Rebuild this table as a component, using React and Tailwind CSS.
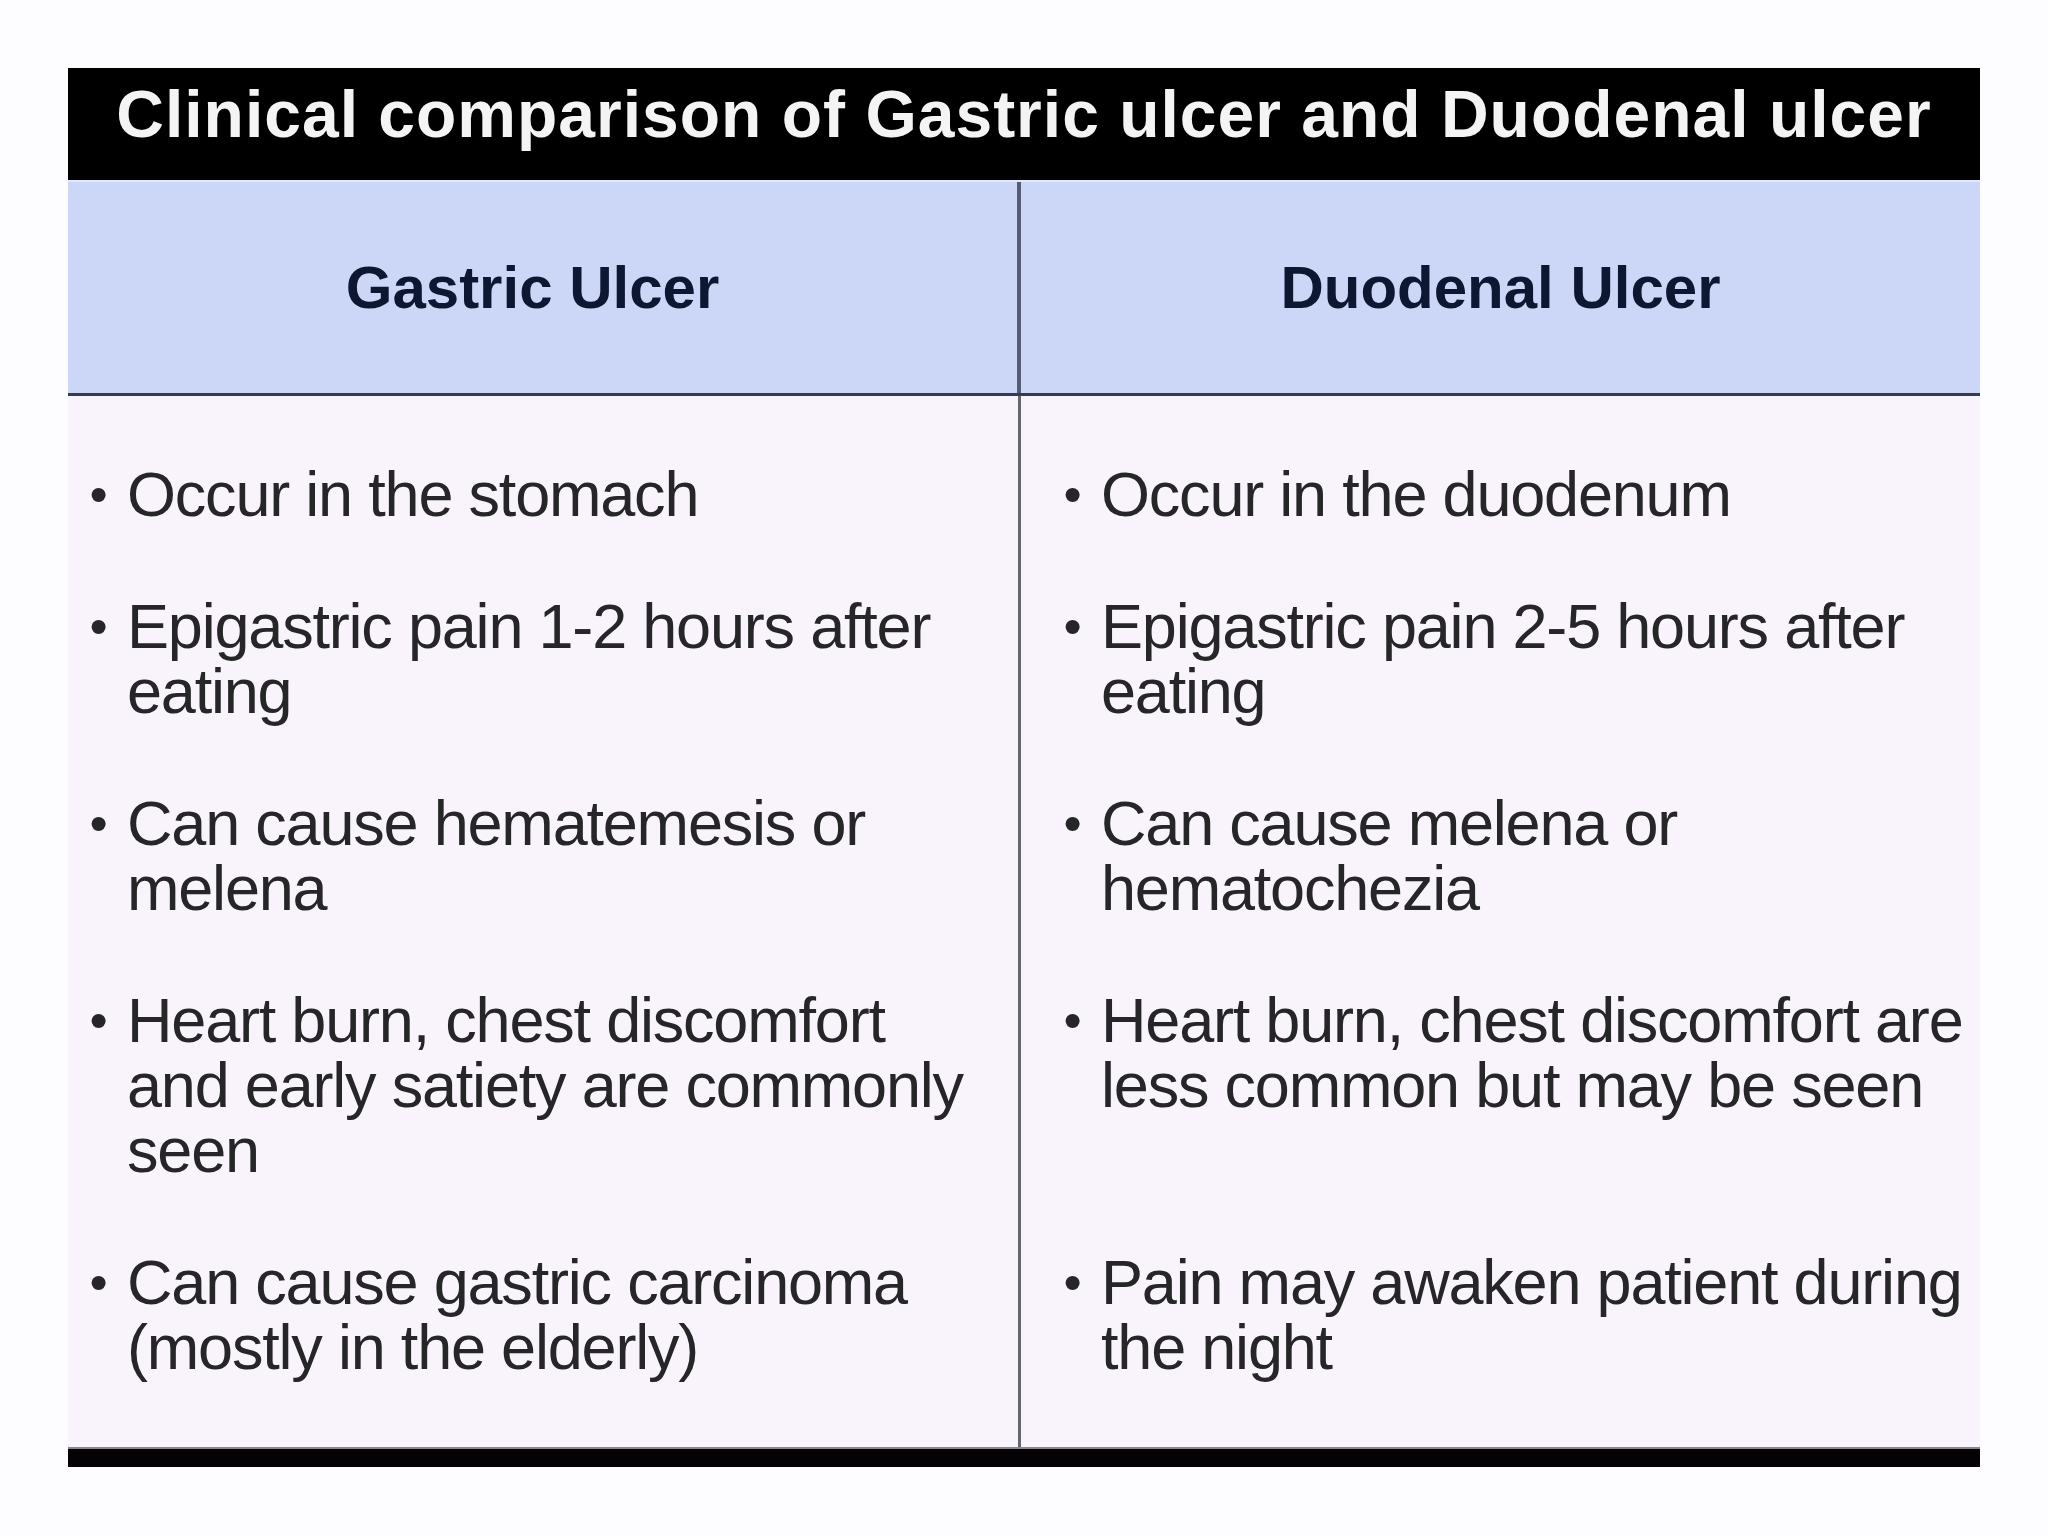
import React from 'react';

const rows = [
  {
    left: ['Occur in the stomach'],
    right: ['Occur in the duodenum'],
  },
  {
    left: ['Epigastric pain 1-2 hours after', 'eating'],
    right: ['Epigastric pain 2-5 hours after', 'eating'],
  },
  {
    left: ['Can cause hematemesis or', 'melena'],
    right: ['Can cause melena or', 'hematochezia'],
  },
  {
    left: ['Heart burn, chest discomfort', 'and early satiety are commonly', 'seen'],
    right: ['Heart burn, chest discomfort are', 'less common but may be seen'],
  },
  {
    left: ['Can cause gastric carcinoma', '(mostly in the elderly)'],
    right: ['Pain may awaken patient during', 'the night'],
  },
];

function Bullet({ lines }) {
  return (
    <div className="flex items-start gap-[14px]">
      <span className="w-[30px] shrink-0 text-center text-[52px] leading-[65px]">•</span>
      <div className="whitespace-nowrap">
        {lines.map((line, i) => (
          <div key={i}>{line}</div>
        ))}
      </div>
    </div>
  );
}

export default function App() {
  return (
    <div className="min-h-screen bg-[#fdfcfe] pt-[68px] font-['Liberation_Sans',Arial,sans-serif]">
      <div className="mx-auto w-[1912px]">
        {/* Title */}
        <div className="flex h-[112px] justify-center bg-black pt-[13px]">
          <h1 className="text-[66px] font-bold leading-none tracking-[1px] text-[#f4f4f4]">
            Clinical comparison of Gastric ulcer and Duodenal ulcer
          </h1>
        </div>

        {/* Column headers */}
        <div className="grid h-[216px] grid-cols-[953px_1fr] border-t-2 border-b-[3px] border-t-[#e2e8fb] border-b-[#353c4d] bg-[#ccd7f8] text-[60px] font-bold leading-none text-[#0e1731]">
          <div className="flex items-center justify-center border-r-[4px] border-[#545b73] pr-[20px]">
            Gastric Ulcer
          </div>
          <div className="flex items-center justify-center">Duodenal Ulcer</div>
        </div>

        {/* Body */}
        <div className="grid grid-cols-[953px_1fr] bg-[#f9f4fc] text-[63px] leading-[65px] tracking-[-1.2px] text-[#262628]">
          {rows.map((row, i) => (
            <React.Fragment key={i}>
              <div
                className={`border-r-[3px] border-[#66666e] pb-[67px] pl-[15px] ${
                  i === 0 ? 'pt-[66px]' : ''
                }`}
              >
                <Bullet lines={row.left} />
              </div>
              <div className={`pb-[67px] pl-[36px] ${i === 0 ? 'pt-[66px]' : ''}`}>
                <Bullet lines={row.right} />
              </div>
            </React.Fragment>
          ))}
        </div>

        {/* Bottom rule */}
        <div className="h-[20px] border-t-2 border-[#8a8690] bg-[#050206]" />
      </div>
    </div>
  );
}
